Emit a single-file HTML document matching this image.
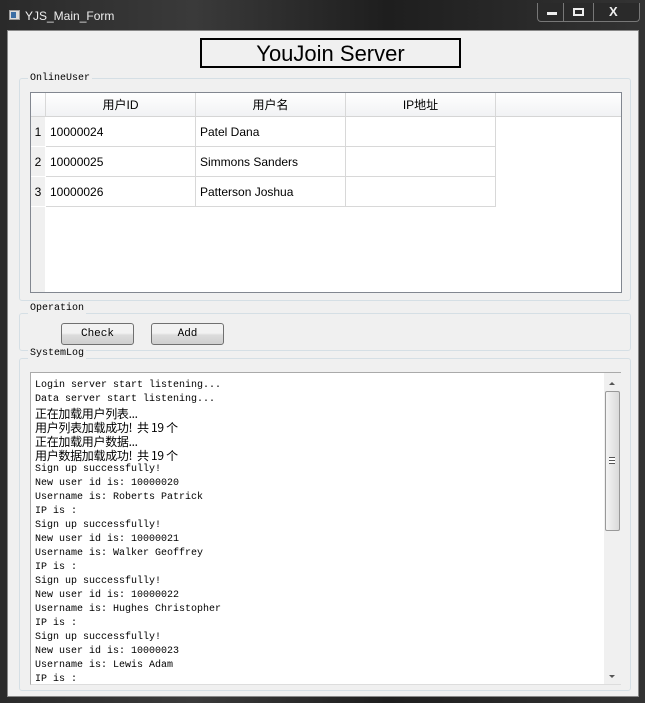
<!DOCTYPE html>
<html><head><meta charset="utf-8"><style>
*{margin:0;padding:0;box-sizing:border-box}
body{width:645px;height:703px;overflow:hidden;background:#1c1c1c;position:relative;font-family:"Liberation Sans","Noto Sans CJK SC",sans-serif}
.a{position:absolute}
.bg{background:linear-gradient(90deg,#2a2a2a,#3a3a3a 30%,#1e1e1e 60%,#333 100%)}
.mono{font-family:"Liberation Mono","Noto Sans CJK SC",monospace}
.grp{position:absolute;border:1px solid #d5dfe5;border-radius:3px}
.lbl{position:absolute;background:#f0f0f0;font-size:10px;color:#000;padding:0 2px;line-height:12px}
.hd{position:absolute;top:0;height:24px;border-right:1px solid #d8d8d8;border-bottom:1px solid #d5d5d5;background:linear-gradient(#fff,#f1f2f4);font-size:12px;text-align:center;line-height:24px}
.cell{position:absolute;height:30px;border-right:1px solid #d8d8d8;border-bottom:1px solid #d8d8d8;font-size:12px;line-height:31px;padding-left:4px}
.rn{position:absolute;left:0;width:14px;height:30px;background:#f0f0f0;font-size:12px;line-height:31px;text-align:center;border-bottom:1px solid #fff}
.btn{position:absolute;height:22px;border:1px solid #707070;border-radius:3px;background:linear-gradient(#f2f2f2 45%,#dcdcdc 55%,#cfcfcf);font-size:11px;text-align:center;line-height:20px}
.log{position:absolute;left:4px;top:6px;font-size:10px;color:#000}
.log div{height:14px;line-height:14px;white-space:pre;overflow:visible}
.log .c{font-size:12px;font-family:"Noto Sans CJK SC",sans-serif;letter-spacing:-0.3px}
</style></head><body>
<div class="a bg" style="left:0;top:0;width:645px;height:703px"></div>
<div class="a" style="left:9px;top:10px;width:11px;height:10px;background:#ddd;border:1px solid #999"></div>
<div class="a" style="left:11px;top:12px;width:5px;height:6px;background:#3b6ea5"></div>
<div class="a" style="left:25px;top:8px;color:#eee;font-size:12px;line-height:16px">YJS_Main_Form</div>
<div class="a" style="left:537px;top:3px;width:103px;height:19px;border:1px solid #777;border-top:none;border-radius:0 0 4px 4px;background:#2a2a2a"></div>
<div class="a" style="left:563px;top:3px;width:1px;height:19px;background:#777"></div>
<div class="a" style="left:593px;top:3px;width:1px;height:19px;background:#777"></div>
<div class="a" style="left:547px;top:12px;width:10px;height:3px;background:#eee"></div>
<div class="a" style="left:573px;top:8px;width:11px;height:8px;border:2px solid #eee"></div>
<div class="a" style="left:609px;top:4px;color:#eee;font-size:13px;font-weight:bold">X</div>
<div class="a" style="left:7px;top:30px;width:632px;height:667px;border:1px solid #888;background:#f0f0f0"></div>
<div class="a" style="left:200px;top:38px;width:261px;height:30px;border:2px solid #000;font-size:22px;text-align:center;line-height:27px">YouJoin Server</div>

<div class="grp" style="left:19px;top:78px;width:612px;height:223px"></div>
<div class="lbl mono" style="left:28px;top:73px">OnlineUser</div>
<div class="a" style="left:30px;top:92px;width:592px;height:201px;border:1px solid #828790;background:#fff;overflow:hidden">
 <div class="a" style="left:0;top:0;width:14px;height:200px;background:#f0f0f0"></div>
 <div class="hd" style="left:0;width:15px"></div>
 <div class="hd" style="left:15px;width:150px">用户ID</div>
 <div class="hd" style="left:165px;width:150px">用户名</div>
 <div class="hd" style="left:315px;width:150px">IP地址</div>
 <div class="hd" style="left:465px;width:130px;border-right:none"></div>
 <div class="rn" style="top:24px">1</div><div class="rn" style="top:54px">2</div><div class="rn" style="top:84px">3</div>
 <div class="cell" style="left:15px;top:24px;width:150px">10000024</div>
 <div class="cell" style="left:165px;top:24px;width:150px">Patel Dana</div>
 <div class="cell" style="left:315px;top:24px;width:150px"></div>
 <div class="cell" style="left:15px;top:54px;width:150px">10000025</div>
 <div class="cell" style="left:165px;top:54px;width:150px">Simmons Sanders</div>
 <div class="cell" style="left:315px;top:54px;width:150px"></div>
 <div class="cell" style="left:15px;top:84px;width:150px">10000026</div>
 <div class="cell" style="left:165px;top:84px;width:150px">Patterson Joshua</div>
 <div class="cell" style="left:315px;top:84px;width:150px"></div>
</div>

<div class="grp" style="left:19px;top:313px;width:612px;height:38px"></div>
<div class="lbl mono" style="left:28px;top:303px">Operation</div>
<div class="btn mono" style="left:61px;top:323px;width:73px">Check</div>
<div class="btn mono" style="left:151px;top:323px;width:73px">Add</div>

<div class="grp" style="left:19px;top:358px;width:612px;height:333px"></div>
<div class="lbl mono" style="left:28px;top:348px">SystemLog</div>
<div class="a" style="left:30px;top:372px;width:591px;height:313px;border:1px solid #aaa;border-right:none;border-bottom:1px solid #ddd;background:#fff;overflow:hidden">
<div class="log mono">
<div>Login server start listening...</div>
<div>Data server start listening...</div>
<div class="c">正在加载用户列表...</div>
<div class="c">用户列表加载成功!  共 19 个</div>
<div class="c">正在加载用户数据...</div>
<div class="c">用户数据加载成功!  共 19 个</div>
<div>Sign up successfully!</div>
<div>New user id is: 10000020</div>
<div>Username is: Roberts Patrick</div>
<div>IP is :</div>
<div>Sign up successfully!</div>
<div>New user id is: 10000021</div>
<div>Username is: Walker Geoffrey</div>
<div>IP is :</div>
<div>Sign up successfully!</div>
<div>New user id is: 10000022</div>
<div>Username is: Hughes Christopher</div>
<div>IP is :</div>
<div>Sign up successfully!</div>
<div>New user id is: 10000023</div>
<div>Username is: Lewis Adam</div>
<div>IP is :</div>
</div>
<div class="a" style="left:573px;top:0;width:17px;height:312px;background:#f0f0f0"></div>
<div class="a" style="left:578px;top:6px;width:0;height:0;border:3px solid transparent;border-bottom:3px solid #555"></div>
<div class="a" style="left:578px;top:302px;width:0;height:0;border:3px solid transparent;border-top:3px solid #555"></div>
<div class="a" style="left:574px;top:18px;width:15px;height:140px;border:1px solid #999;border-radius:2px;background:linear-gradient(90deg,#f4f4f4,#dadada)"></div>
<div class="a" style="left:578px;top:84px;width:6px;height:7px;border-top:1px solid #555;border-bottom:1px solid #555;background:linear-gradient(#fff 0,#fff 2px,#555 2px,#555 3px,#fff 3px)"></div>
</div>
</body></html>
